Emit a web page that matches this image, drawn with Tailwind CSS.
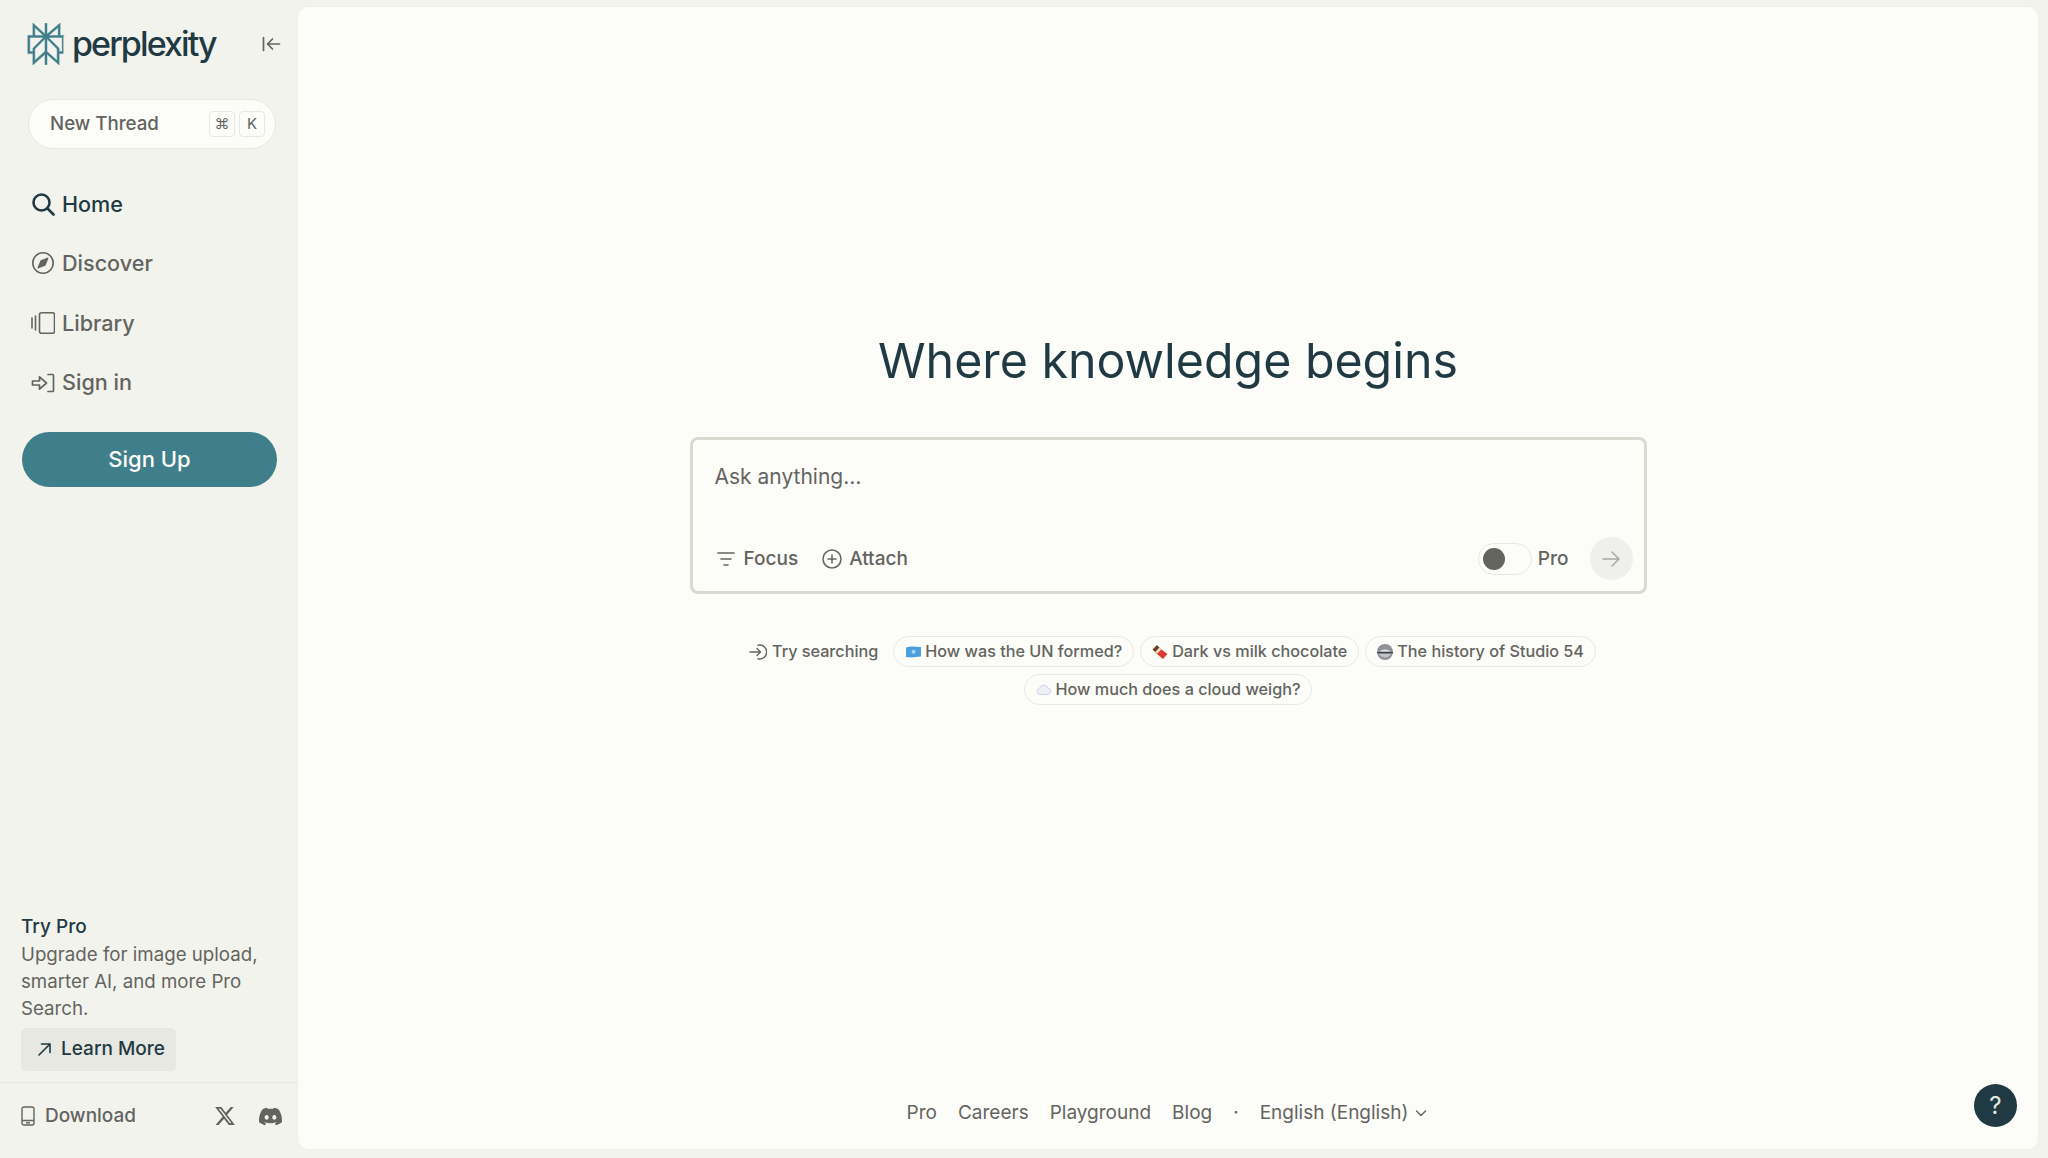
<!DOCTYPE html>
<html lang="en">
<head>
<meta charset="utf-8">
<title>Perplexity</title>
<script src="https://cdn.jsdelivr.net/npm/@tailwindcss/browser@4"></script>
</head>
<body class="m-0 h-[1158px] w-[2048px] overflow-hidden bg-[#f3f3ee] font-['Inter','Liberation_Sans',sans-serif] text-[#64645f]">
<div class="flex h-[1158px] w-[2048px]">
  <aside class="flex h-full w-[298px] shrink-0 flex-col">
    <div class="flex h-[87px] items-center pl-[25px]">
      <svg class="h-[42px] w-[42px] shrink-0 text-[#3f7e8b]" viewBox="0 0 24 24" fill="currentColor" stroke="currentColor" stroke-width="0.25"><path d="M22.3977 7.0896h-2.3106V.0676l-7.5094 6.3542V.1577h-1.1554v6.1966L4.4904 0v7.0896H1.6023v10.3976h2.8882V24l6.932-6.1416v6.0001h1.1554v-6.0001l6.9319 6.1416v-6.5128h2.3106V7.0896zm-3.4657-4.531v4.531h-5.355l5.355-4.531zm-13.2862.0676l4.8691 4.4634H5.6458V2.6262zM2.7576 16.332V8.245h7.8476l-6.1149 6.1147v1.9723H2.7576zm2.8882 5.0404v-3.8852h.0001v-2.6488l5.7763-5.7764v7.0111l-5.7764 5.2993zm12.7086.0248l-5.7766-5.1509V9.0618l5.7766 5.7766v6.5588zm2.8882-5.0652h-1.733v-1.9723L13.3948 8.245h7.8478v8.087z"/></svg>
      <span class="ml-[5px] text-[34px] font-medium leading-none tracking-[-1.9px] text-[#1f3a42]">perplexity</span>
      <svg class="ml-auto mr-[17px] h-[20px] w-[20px]" viewBox="0 0 20 20" fill="none" stroke="#64645f" stroke-width="1.7" stroke-linecap="round" stroke-linejoin="round"><path d="M2.5 3.5v13M18.5 10H7M11.5 5 6.5 10l5 5"/></svg>
    </div>
    <div class="ml-[28px] mt-[12px] flex h-[50px] w-[248px] items-center rounded-full border border-[#e8e8e3] bg-[#fcfcf9] pl-[21px] pr-[10px]">
      <span class="pt-[1px] text-[18.7px] font-medium">New Thread</span>
      <span class="ml-auto flex h-[26px] w-[26px] items-center justify-center rounded-[4px] border border-[#e8e8e3] text-[15px]">⌘</span>
      <span class="ml-[4px] flex h-[26px] w-[26px] items-center justify-center rounded-[4px] border border-[#e8e8e3] text-[15px]">K</span>
    </div>
    <nav class="mt-[25px] flex flex-col pl-[31px] text-[21.6px] font-medium">
      <a class="flex h-[59.6px] items-center gap-[7px] text-[#1f3a42]">
        <svg class="h-[24px] w-[24px]" viewBox="0 0 24 24" fill="none" stroke="currentColor" stroke-width="2.6" stroke-linecap="round"><circle cx="10.5" cy="10.5" r="8"/><path d="m16.5 16.5 6 6"/></svg>
        Home</a>
      <a class="flex h-[59.6px] items-center gap-[7px]">
        <svg class="h-[24px] w-[24px]" viewBox="0 0 24 24" fill="none" stroke="currentColor" stroke-width="1.6"><circle cx="12" cy="12" r="10.2"/><path d="m16.6 7.4-2.7 6.5-6.5 2.7 2.7-6.5z" fill="currentColor" stroke-linejoin="round"/></svg>
        Discover</a>
      <a class="flex h-[59.6px] items-center gap-[7px]">
        <svg class="h-[24px] w-[24px]" viewBox="0 0 24 24" fill="none" stroke="currentColor" stroke-width="1.6" stroke-linecap="round"><path d="M1 7v10M4.5 5v14"/><rect x="8.5" y="1.8" width="15" height="20.4" rx="2"/></svg>
        Library</a>
      <a class="flex h-[59.6px] items-center gap-[7px]">
        <svg class="h-[24px] w-[24px]" viewBox="0 0 24 24" fill="none" stroke="currentColor" stroke-width="1.7" stroke-linejoin="round" stroke-linecap="round"><path d="M1.5 10h7V5.8l7 6.2-7 6.2V14h-7zM17 3.5h4.5a1 1 0 0 1 1 1v15a1 1 0 0 1-1 1H17"/></svg>
        Sign in</a>
    </nav>
    <a class="ml-[22px] mt-[20px] flex h-[55px] w-[255px] items-center justify-center rounded-full bg-[#3f7e8b] text-[22px] font-medium text-[#fcfcf9]">Sign Up</a>
    <div class="mt-auto pl-[21px] pr-[18px]">
      <p class="text-[19px] font-medium leading-[29px] text-[#1f3a42]">Try Pro</p>
      <p class="text-[18.7px] leading-[27px]">Upgrade for image upload, smarter AI, and more Pro Search.</p>
      <a class="mt-[6px] flex h-[43px] w-[155px] items-center gap-[9px] rounded-[5px] bg-[#e8e8e3] pl-[16px] text-[19px] font-medium text-[#1f3a42]">
        <svg class="h-[15px] w-[15px]" viewBox="0 0 15 15" fill="none" stroke="currentColor" stroke-width="1.6" stroke-linecap="round" stroke-linejoin="round"><path d="M2 13 13 2M4.5 2H13v8.5"/></svg>
        Learn More</a>
    </div>
    <div class="mt-[11px] flex h-[76px] items-start border-t border-[#e8e8e3] pl-[21px] pr-[16px] pt-[17px]">
      <a class="flex h-[32px] items-center gap-[10px] text-[19px] font-medium">
        <svg class="h-[20px] w-[14px]" viewBox="0 0 14 20" fill="none" stroke="currentColor" stroke-width="1.4"><rect x="1" y="1" width="12" height="18" rx="2"/><path d="M1 14.5h12M5 16.8h4"/></svg>
        Download</a>
      <div class="ml-auto flex h-[32px] items-center gap-[23px]">
        <svg class="h-[22px] w-[22px]" viewBox="0 0 24 24" fill="currentColor"><path d="M18.244 2.25h3.308l-7.227 8.26 8.502 11.24H16.17l-5.214-6.817L4.99 21.75H1.68l7.73-8.835L1.254 2.25H8.08l4.713 6.231zm-1.161 17.52h1.833L7.084 4.126H5.117z"/></svg>
        <svg class="h-[23px] w-[23px]" viewBox="0 0 24 24" fill="currentColor"><path d="M20.317 4.3698a19.7913 19.7913 0 00-4.8851-1.5152.0741.0741 0 00-.0785.0371c-.211.3753-.4447.8648-.6083 1.2495-1.8447-.2762-3.68-.2762-5.4868 0-.1636-.3933-.4058-.8742-.6177-1.2495a.077.077 0 00-.0785-.037 19.7363 19.7363 0 00-4.8852 1.515.0699.0699 0 00-.0321.0277C.5334 9.0458-.319 13.5799.0992 18.0578a.0824.0824 0 00.0312.0561c2.0528 1.5076 4.0413 2.4228 5.9929 3.0294a.0777.0777 0 00.0842-.0276c.4616-.6304.8731-1.2952 1.226-1.9942a.076.076 0 00-.0416-.1057c-.6528-.2476-1.2743-.5495-1.8722-.8923a.077.077 0 01-.0076-.1277c.1258-.0943.2517-.1923.3718-.2914a.0743.0743 0 01.0776-.0105c3.9278 1.7933 8.18 1.7933 12.0614 0a.0739.0739 0 01.0785.0095c.1202.099.246.1981.3728.2924a.077.077 0 01-.0066.1276 12.2986 12.2986 0 01-1.873.8914.0766.0766 0 00-.0407.1067c.3604.698.7719 1.3628 1.225 1.9932a.076.076 0 00.0842.0286c1.961-.6067 3.9495-1.5219 6.0023-3.0294a.077.077 0 00.0313-.0552c.5004-5.177-.8382-9.6739-3.5485-13.6604a.061.061 0 00-.0312-.0286zM8.02 15.3312c-1.1825 0-2.1569-1.0857-2.1569-2.419 0-1.3332.9555-2.4189 2.157-2.4189 1.2108 0 2.1757 1.0952 2.1568 2.419 0 1.3332-.9555 2.4189-2.1569 2.4189zm7.9748 0c-1.1825 0-2.1569-1.0857-2.1569-2.419 0-1.3332.9554-2.4189 2.1569-2.4189 1.2108 0 2.1757 1.0952 2.1568 2.419 0 1.3332-.946 2.4189-2.1568 2.4189Z"/></svg>
      </div>
    </div>
  </aside>

  <main class="relative mb-[9px] mr-[10px] mt-[7px] flex flex-1 flex-col items-center rounded-[10px] bg-[#fcfcf9] shadow-[0_0_2px_rgba(0,0,0,0.05)]">
    <h1 class="mt-[324px] text-[48.3px] font-normal leading-[60px] text-[#1f3a42]">Where knowledge begins</h1>
    <div class="mt-[46px] flex h-[157px] w-[957px] flex-col rounded-[8px] border-[3px] border-[#d9d9d2] bg-[#fcfcf9] pl-[22px] pr-[11px]">
      <div class="pt-[21px] text-[21px] leading-[32px]">Ask anything…</div>
      <div class="mt-auto mb-[11px] flex h-[43px] items-center text-[19px] font-medium">
        <span class="flex items-center gap-[8px] pl-[1px]">
          <svg class="h-[20px] w-[20px]" viewBox="0 0 20 20" fill="none" stroke="currentColor" stroke-width="1.6" stroke-linecap="round"><path d="M2 4h16M5 10h10M8 16h4"/></svg>
          <span class="pt-[1px]">Focus</span></span>
        <span class="ml-[24px] flex items-center gap-[7px]">
          <svg class="h-[20px] w-[20px]" viewBox="0 0 20 20" fill="none" stroke="currentColor" stroke-width="1.5" stroke-linecap="round"><circle cx="10" cy="10" r="9"/><path d="M10 6v8M6 10h8"/></svg>
          <span class="pt-[1px]">Attach</span></span>
        <span class="ml-auto flex h-[32px] w-[54px] items-center rounded-full border border-[#e8e8e3] pl-[4px]"><span class="h-[22px] w-[22px] rounded-full bg-[#64645f]"></span></span>
        <span class="ml-[6px] pt-[1px]">Pro</span>
        <span class="ml-[21px] flex h-[43px] w-[43px] items-center justify-center rounded-full bg-[#efefeb]">
          <svg class="h-[18px] w-[18px]" viewBox="0 0 18 18" fill="none" stroke="#a9a9a4" stroke-width="1.5" stroke-linecap="round" stroke-linejoin="round"><path d="M1 9h16M10 2l7 7-7 7"/></svg>
        </span>
      </div>
    </div>
    <div class="mt-[42px] flex w-[957px] flex-wrap justify-center gap-x-[6px] gap-y-[7px] text-[16.2px] font-medium leading-[31px]">
      <span class="ml-[9px] mr-[9px] flex h-[31px] items-center gap-[5px]">
        <svg class="h-[18px] w-[18px]" viewBox="0 0 18 18" fill="none" stroke="currentColor" stroke-width="1.4" stroke-linecap="round" stroke-linejoin="round"><path d="M1 9h10M8 5.5 11.5 9 8 12.5M9 2.2a7 7 0 1 1 0 13.6"/></svg>
        Try searching</span>
      <span class="flex h-[31px] items-center gap-[4px] rounded-full border border-[#e8e8e3] pl-[12px] pr-[11px]">
        <svg class="h-[12px] w-[15px]" viewBox="0 0 15 12"><path d="M0 1.5 5 .5l10 .5v9.5l-10 1-5-.5z" fill="#4b9fdc"/><circle cx="7.5" cy="5.8" r="2" fill="#a9d6f5"/></svg>
        How was the UN formed?</span>
      <span class="flex h-[31px] items-center gap-[4px] rounded-full border border-[#e8e8e3] pl-[11px] pr-[11px]">
        <svg class="h-[16px] w-[16px]" viewBox="0 0 16 16"><path d="M.5 5.5 5 1l4.5 4.5L5 10z" fill="#6e3d25"/><path d="M3 8 8 3l1.5 2.5L5 10z" fill="#f0d9c0"/><path d="M5 10l4.5-4.5L15.5 10 11 15z" fill="#dc3b30"/></svg>
        Dark vs milk chocolate</span>
      <span class="flex h-[31px] items-center gap-[4px] rounded-full border border-[#e8e8e3] pl-[11px] pr-[11px]">
        <svg class="h-[16px] w-[16px]" viewBox="0 0 16 16"><circle cx="8" cy="8" r="8" fill="#8f9399"/><path d="M0 8h16v1.2H0z" fill="#3a3d42"/><path d="M3 7.6c1-2.8 9-2.8 10 0z" fill="#e4e6e8"/><path d="M2 10h12a7 7 0 0 1-12 0z" fill="#c3c6c9"/></svg>
        The history of Studio 54</span>
      <span class="flex h-[31px] items-center gap-[4px] rounded-full border border-[#e8e8e3] pl-[11px] pr-[11px]">
        <svg class="h-[11px] w-[16px]" viewBox="0 0 16 11"><path d="M4 10.5a3.2 3.2 0 0 1-.5-6.3A4.5 4.5 0 0 1 12 4a3.3 3.3 0 0 1 0 6.5z" fill="#eef0f7" stroke="#c6cbdc" stroke-width=".8"/></svg>
        How much does a cloud weigh?</span>
    </div>
    <footer class="absolute bottom-[20px] left-0 right-0 flex h-[32px] items-center justify-center pr-[2px] text-[19px]">
      <a>Pro</a><a class="ml-[21px]">Careers</a><a class="ml-[21px]">Playground</a><a class="ml-[21px]">Blog</a><span class="mx-[21px]">·</span>
      <a class="flex items-center gap-[7px]">English (English)
        <svg class="h-[12px] w-[12px]" viewBox="0 0 12 12" fill="none" stroke="currentColor" stroke-width="1.4" stroke-linecap="round" stroke-linejoin="round"><path d="M1.5 4 6 8.5 10.5 4"/></svg></a>
    </footer>
    <button class="absolute bottom-[22px] right-[21px] flex h-[43px] w-[43px] items-center justify-center rounded-full bg-[#1f3a42] text-[24px] font-normal text-[#e8e8e3]">?</button>
  </main>
</div>
</body>
</html>
